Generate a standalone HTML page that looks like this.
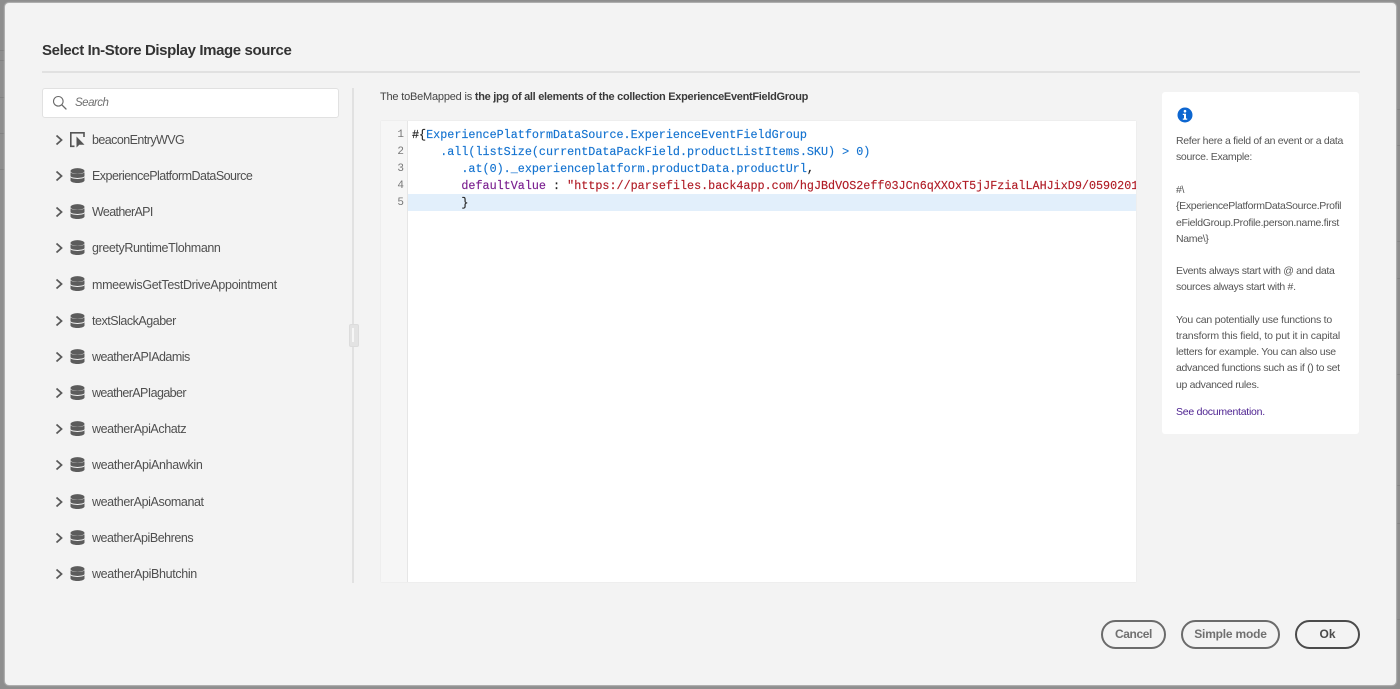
<!DOCTYPE html>
<html lang="en">
<head>
<meta charset="utf-8">
<title>Select In-Store Display Image source</title>
<style>
html,body{margin:0;padding:0;width:1400px;height:689px;overflow:hidden;background:#8e8e8e;font-family:"Liberation Sans",sans-serif;}
.abs,.t,.ln,.cl,.r,.i,.c,.line{position:absolute;}
.bg{position:absolute;height:1px;background:#828282;}
#dlg{position:absolute;left:5px;top:3px;width:1391px;height:682px;background:#f3f3f3;border-radius:4px;box-shadow:0 0 1px 1px #b5b5b5;}
#stage{position:absolute;left:0;top:0;width:1400px;height:689px;filter:blur(.35px);}
.t{white-space:nowrap;line-height:16px;}
.r{left:92px;font-size:12.5px;color:#4f4f4f;white-space:nowrap;line-height:16px;}
.i{left:1176px;font-size:10.5px;color:#555;white-space:nowrap;line-height:14px;letter-spacing:-.32px;}
.c{height:17px;line-height:17px;font-family:"Liberation Mono",monospace;font-size:11.75px;white-space:pre;-webkit-text-stroke:.15px currentColor;}
.ln{left:381px;width:23px;height:17px;line-height:17px;text-align:right;font-family:"Liberation Mono",monospace;font-size:11px;color:#777;}
.btn{position:absolute;top:620px;height:25px;border:2px solid #6b6b6b;border-radius:15px;background:transparent;text-align:center;line-height:25px;font-size:12px;font-weight:bold;color:#707070;}
svg{position:absolute;overflow:visible;}
</style>
</head>
<body>
<div class="bg" style="left:0;top:50px;width:5px"></div>
<div class="bg" style="left:0;top:60px;width:5px"></div>
<div class="bg" style="left:0;top:97px;width:5px"></div>
<div class="bg" style="left:0;top:133px;width:5px"></div>
<div class="bg" style="left:0;top:169px;width:5px"></div>
<div class="bg" style="left:1397px;top:109px;width:3px"></div>
<div class="bg" style="left:1397px;top:145px;width:3px"></div>
<div class="bg" style="left:1397px;top:241px;width:3px"></div>
<div class="bg" style="left:1397px;top:278px;width:3px"></div>
<div class="bg" style="left:1397px;top:374px;width:3px"></div>
<div class="bg" style="left:1397px;top:485px;width:3px"></div>
<div class="bg" style="left:1397px;top:523px;width:3px"></div>
<div class="bg" style="left:1397px;top:619px;width:3px"></div>
<div id="dlg"></div>
<div id="stage">
  <svg width="0" height="0" style="left:0;top:0"><defs>
    <g id="chev"><path d="M2.5 2.5L7.5 7L2.5 11.5" fill="none" stroke="#5a5a5a" stroke-width="1.8"/></g>
    <g id="db"><ellipse cx="7.500" cy="3" rx="7" ry="2.900" fill="#5c5c5c"/><path d="M.5 4.200C2 6.500 13 6.500 14.500 4.200V8.300C13 10.500 2 10.500 .5 8.300Z" fill="#5c5c5c"/><path d="M.5 9.300C2 11.500 13 11.500 14.500 9.300V12.800C13 15.800 2 15.800 .5 12.800Z" fill="#5c5c5c"/></g>
  </defs></svg>

  <div class="t" style="left:42px;top:42px;font-size:15px;line-height:18px;font-weight:bold;color:#333;letter-spacing:-.39px">Select In-Store Display Image source</div>
  <div class="abs" style="left:42px;top:71px;width:1318px;height:2px;background:#e1e1e1"></div>

  <div class="abs" style="left:42px;top:88px;width:295px;height:28px;background:#fff;border:1px solid #e1e1e1;border-radius:3px"></div>
  <svg style="left:52px;top:95px" width="16" height="16" viewBox="0 0 16 16"><circle cx="6.3" cy="6.3" r="4.8" fill="none" stroke="#6a6a6a" stroke-width="1.1"/><path d="M9.8 9.8L14 14" stroke="#6a6a6a" stroke-width="1.3" stroke-linecap="round"/></svg>
  <div class="t" style="left:75px;top:95px;font-size:11.5px;font-style:italic;color:#707070;letter-spacing:-.5px">Search</div>

  <div class="abs" style="left:352px;top:88px;width:2px;height:495px;background:#e1e1e1"></div>
  <div class="abs" style="left:349px;top:324px;width:8px;height:21px;background:#e3e3e3;border:1px solid #dcdcdc;border-radius:2px"></div>
  <div class="abs" style="left:352px;top:328px;width:2px;height:14px;background:#f6f6f6"></div>

  <svg style="left:54px;top:133px" width="12" height="14" viewBox="0 0 12 14"><use href="#chev"/></svg>
  <svg style="left:70px;top:132px" width="15" height="16" viewBox="0 0 15 16"><path d="M4.500 14.300H.8V.8H14V5" fill="none" stroke="#555" stroke-width="1.600"/><path d="M6.500 4.500V15.500L9.300 12.700H14.500Z" fill="#555"/></svg>
  <div class="r" style="top:132px;letter-spacing:-.56px">beaconEntryWVG</div>

  <svg style="left:54px;top:169px" width="12" height="14" viewBox="0 0 12 14"><use href="#chev"/></svg>
  <svg style="left:70px;top:168px" width="15" height="16" viewBox="0 0 15 16"><use href="#db"/></svg>
  <div class="r" style="top:168px;letter-spacing:-.53px">ExperiencePlatformDataSource</div>

  <svg style="left:54px;top:205px" width="12" height="14" viewBox="0 0 12 14"><use href="#chev"/></svg>
  <svg style="left:70px;top:204px" width="15" height="16" viewBox="0 0 15 16"><use href="#db"/></svg>
  <div class="r" style="top:204px;letter-spacing:-.65px">WeatherAPI</div>

  <svg style="left:54px;top:241px" width="12" height="14" viewBox="0 0 12 14"><use href="#chev"/></svg>
  <svg style="left:70px;top:240px" width="15" height="16" viewBox="0 0 15 16"><use href="#db"/></svg>
  <div class="r" style="top:240px;letter-spacing:-.4px">greetyRuntimeTlohmann</div>

  <svg style="left:54px;top:277px" width="12" height="14" viewBox="0 0 12 14"><use href="#chev"/></svg>
  <svg style="left:70px;top:276px" width="15" height="16" viewBox="0 0 15 16"><use href="#db"/></svg>
  <div class="r" style="top:277px;letter-spacing:-.35px">mmeewisGetTestDriveAppointment</div>

  <svg style="left:54px;top:314px" width="12" height="14" viewBox="0 0 12 14"><use href="#chev"/></svg>
  <svg style="left:70px;top:313px" width="15" height="16" viewBox="0 0 15 16"><use href="#db"/></svg>
  <div class="r" style="top:313px;letter-spacing:-.48px">textSlackAgaber</div>

  <svg style="left:54px;top:350px" width="12" height="14" viewBox="0 0 12 14"><use href="#chev"/></svg>
  <svg style="left:70px;top:349px" width="15" height="16" viewBox="0 0 15 16"><use href="#db"/></svg>
  <div class="r" style="top:349px;letter-spacing:-.54px">weatherAPIAdamis</div>

  <svg style="left:54px;top:386px" width="12" height="14" viewBox="0 0 12 14"><use href="#chev"/></svg>
  <svg style="left:70px;top:385px" width="15" height="16" viewBox="0 0 15 16"><use href="#db"/></svg>
  <div class="r" style="top:385px;letter-spacing:-.6px">weatherAPIagaber</div>

  <svg style="left:54px;top:422px" width="12" height="14" viewBox="0 0 12 14"><use href="#chev"/></svg>
  <svg style="left:70px;top:421px" width="15" height="16" viewBox="0 0 15 16"><use href="#db"/></svg>
  <div class="r" style="top:421px;letter-spacing:-.41px">weatherApiAchatz</div>

  <svg style="left:54px;top:458px" width="12" height="14" viewBox="0 0 12 14"><use href="#chev"/></svg>
  <svg style="left:70px;top:457px" width="15" height="16" viewBox="0 0 15 16"><use href="#db"/></svg>
  <div class="r" style="top:457px;letter-spacing:-.35px">weatherApiAnhawkin</div>

  <svg style="left:54px;top:495px" width="12" height="14" viewBox="0 0 12 14"><use href="#chev"/></svg>
  <svg style="left:70px;top:494px" width="15" height="16" viewBox="0 0 15 16"><use href="#db"/></svg>
  <div class="r" style="top:494px;letter-spacing:-.4px">weatherApiAsomanat</div>

  <svg style="left:54px;top:531px" width="12" height="14" viewBox="0 0 12 14"><use href="#chev"/></svg>
  <svg style="left:70px;top:530px" width="15" height="16" viewBox="0 0 15 16"><use href="#db"/></svg>
  <div class="r" style="top:530px;letter-spacing:-.47px">weatherApiBehrens</div>

  <svg style="left:54px;top:567px" width="12" height="14" viewBox="0 0 12 14"><use href="#chev"/></svg>
  <svg style="left:70px;top:566px" width="15" height="16" viewBox="0 0 15 16"><use href="#db"/></svg>
  <div class="r" style="top:566px;letter-spacing:-.35px">weatherApiBhutchin</div>

  <div class="t" style="left:380px;top:89px;font-size:11px;color:#444;letter-spacing:-.2px">The toBeMapped is <b style="color:#3a3a3a;letter-spacing:-.3px">the jpg of all elements of the collection ExperienceEventFieldGroup</b></div>

  <div class="abs" style="left:381px;top:121px;width:755px;height:461px;background:#fff;box-shadow:0 0 1px #ddd"></div>
  <div class="abs" style="left:381px;top:121px;width:27px;height:461px;background:#f6f6f6;border-right:1px solid #e6e6e6;box-sizing:border-box"></div>
  <div class="abs" style="left:408px;top:194px;width:728px;height:17px;background:#e2effb"></div>
  <div class="ln" style="top:127px">1</div>
  <div class="ln" style="top:144px">2</div>
  <div class="ln" style="top:161px">3</div>
  <div class="ln" style="top:178px">4</div>
  <div class="ln" style="top:195px">5</div>
  <div class="abs" style="left:412px;top:127px;width:724px;height:90px;overflow:hidden">
    <div class="c" style="left:0;top:0;color:#1473d0"><span style="color:#222">#{</span>ExperiencePlatformDataSource.ExperienceEventFieldGroup</div>
    <div class="c" style="left:0;top:17px;color:#1473d0">    .all(listSize(currentDataPackField.productListItems.SKU) &gt; 0)</div>
    <div class="c" style="left:0;top:34px;color:#1473d0">       .at(0)._experienceplatform.productData.productUrl<span style="color:#222">,</span></div>
    <div class="c" style="left:0;top:51px;color:#7a1f8f">       defaultValue <span style="color:#222">:</span> <span style="color:#b01c26">"https://parsefiles.back4app.com/hgJBdVOS2eff03JCn6qXXOxT5jJFzialLAHJixD9/059020121.jpg"</span></div>
    <div class="c" style="left:0;top:68px;color:#222">       }</div>
  </div>

  <div class="abs" style="left:1162px;top:92px;width:197px;height:342px;background:#fff;border-radius:3px"></div>
  <svg style="left:1177px;top:107px" width="16" height="16" viewBox="0 0 16 16"><circle cx="8" cy="8" r="7.500" fill="#0d66d0"/><circle cx="8" cy="4.200" r="1.300" fill="#fff"/><path d="M5.800 6.700H9V11.500H10.200V12.800H5.800V11.500H7V8H5.800Z" fill="#fff"/></svg>
  <div class="i" style="top:134px">Refer here a field of an event or a data</div>
  <div class="i" style="top:150px">source. Example:</div>
  <div class="i" style="top:183px">#\</div>
  <div class="i" style="top:199px;letter-spacing:-.34px">{ExperiencePlatformDataSource.Profil</div>
  <div class="i" style="top:216px;letter-spacing:-.31px">eFieldGroup.Profile.person.name.first</div>
  <div class="i" style="top:232px">Name\}</div>
  <div class="i" style="top:264px;letter-spacing:-.31px">Events always start with @ and data</div>
  <div class="i" style="top:280px;letter-spacing:-.31px">sources always start with #.</div>
  <div class="i" style="top:313px;letter-spacing:-.23px">You can potentially use functions to</div>
  <div class="i" style="top:329px;letter-spacing:-.15px">transform this field, to put it in capital</div>
  <div class="i" style="top:345px">letters for example. You can also use</div>
  <div class="i" style="top:361px">advanced functions such as if () to set</div>
  <div class="i" style="top:378px">up advanced rules.</div>
  <div class="i" style="top:405px;color:#4b1f8f;letter-spacing:-.25px">See documentation.</div>

  <div class="btn" style="left:1101px;width:61px;letter-spacing:-.4px">Cancel</div>
  <div class="btn" style="left:1181px;width:95px;letter-spacing:-.2px">Simple mode</div>
  <div class="btn" style="left:1295px;width:61px;border-color:#4b4b4b;color:#4b4b4b">Ok</div>
</div>
</body>
</html>
